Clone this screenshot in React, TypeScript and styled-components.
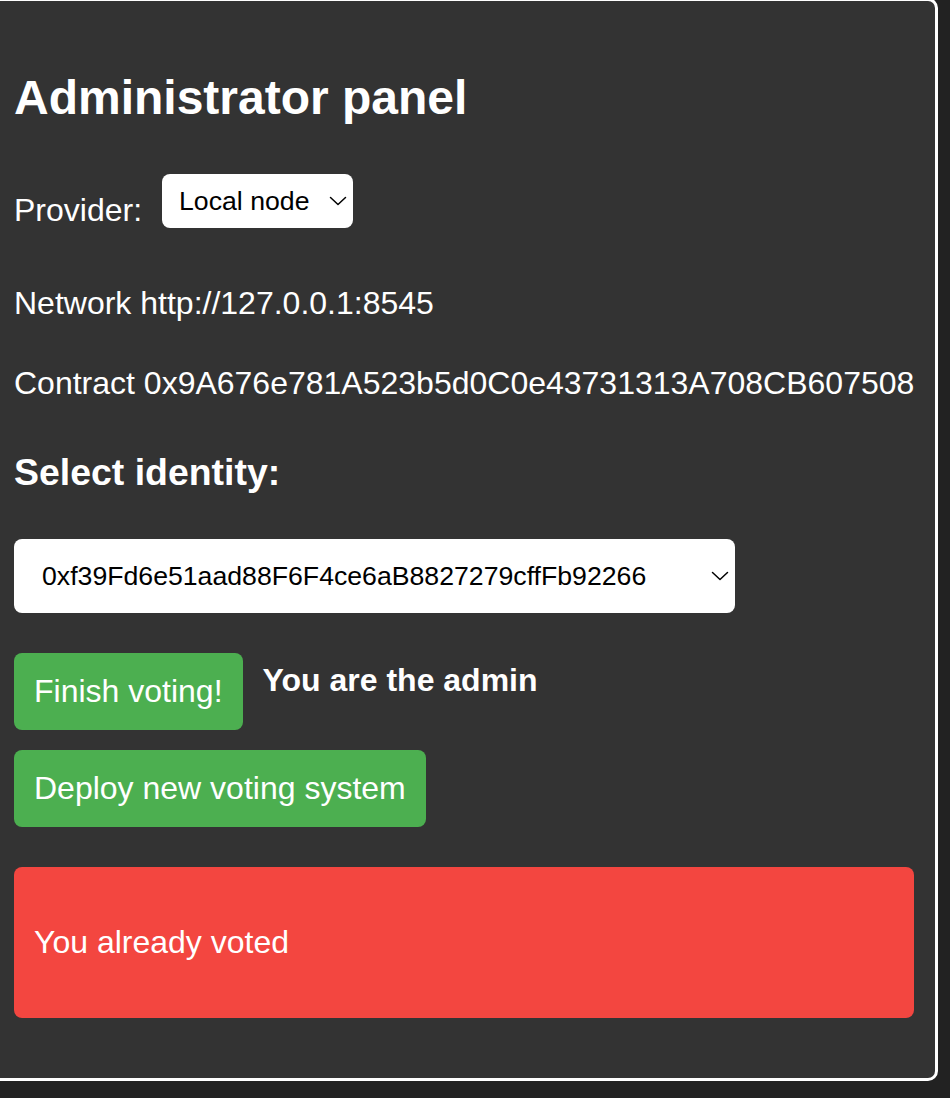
import React, { useState } from 'react';
import styled, { createGlobalStyle } from 'styled-components';

const GlobalStyle = createGlobalStyle`
  html, body {
    margin: 0;
    padding: 0;
    background: #222222;
  }
  body {
    font-family: "Liberation Sans", Arial, Helvetica, sans-serif;
    color: #ffffff;
    overflow: hidden;
  }
`;

const Card = styled.div`
  box-sizing: border-box;
  width: 947px;
  margin: -2px 0 0 -9px;
  padding: 69px 21px 60px 20px;
  background: #333333;
  border: 3px solid #ffffff;
  border-radius: 10px;
  display: flex;
  flex-direction: column;
  align-items: flex-start;
`;

const Title = styled.h2`
  margin: 0;
  font-size: 48px;
  line-height: 56px;
  font-weight: 700;
`;

const SubTitle = styled.h3`
  margin: 49px 0 0;
  font-size: 37.44px;
  line-height: 43px;
  font-weight: 700;
`;

const Row = styled.div<{ $top: number; $align?: string }>`
  display: flex;
  align-items: ${p => p.$align || 'flex-start'};
  gap: 20px;
  margin-top: ${p => p.$top}px;
`;

const Label = styled.label`
  font-size: 32px;
  line-height: 35px;
`;

const Info = styled.p<{ $top: number }>`
  margin: ${p => p.$top}px 0 0;
  font-size: 32px;
  line-height: 37px;
  white-space: nowrap;
`;

const SelectWrap = styled.div<{ $top?: number }>`
  position: relative;
  display: inline-flex;
  margin-top: ${p => p.$top || 0}px;
`;

const Select = styled.select<{ $width: number; $height: number; $pad: number }>`
  appearance: none;
  -webkit-appearance: none;
  box-sizing: border-box;
  width: ${p => p.$width}px;
  height: ${p => p.$height}px;
  padding: 0 30px 0 ${p => p.$pad}px;
  border: none;
  border-radius: 8px;
  background: #ffffff;
  color: #000000;
  font-family: "Liberation Sans", Arial, Helvetica, sans-serif;
  font-size: 26.67px;
  outline: none;
`;

const Chevron = styled.svg<{ $right: number }>`
  position: absolute;
  right: ${p => p.$right}px;
  top: 50%;
  margin-top: -5px;
  width: 18px;
  height: 10px;
  pointer-events: none;
`;

const Button = styled.button`
  box-sizing: border-box;
  padding: 20px;
  border: none;
  border-radius: 8px;
  background: #4caf50;
  color: #ffffff;
  font-family: "Liberation Sans", Arial, Helvetica, sans-serif;
  font-size: 32px;
  line-height: 37px;
  white-space: nowrap;
  cursor: pointer;
`;

const AdminNote = styled.strong`
  margin-top: 9px;
  font-size: 32px;
  line-height: 37px;
  font-weight: 700;
  white-space: nowrap;
`;

const Alert = styled.div`
  box-sizing: border-box;
  align-self: stretch;
  margin-top: 40px;
  padding: 57px 20px;
  border-radius: 8px;
  background: #f34640;
  font-size: 32px;
  line-height: 37px;
`;

const ChevronIcon: React.FC<{ right: number }> = ({ right }) => (
  <Chevron $right={right} viewBox="0 0 18 10">
    <polyline points="1.5,1.5 9,8.5 16.5,1.5" fill="none" stroke="#000" strokeWidth="1.5" strokeLinecap="round" strokeLinejoin="round" />
  </Chevron>
);

const identities = [
  '0xf39Fd6e51aad88F6F4ce6aB8827279cffFb92266',
  '0x70997970C51812dc3A010C7d01b50e0d17dc79C8',
];

export default function App() {
  const [provider, setProvider] = useState('local');
  const [identity, setIdentity] = useState(identities[0]);

  return (
    <>
      <GlobalStyle />
      <Card>
        <Title>Administrator panel</Title>

        <Row $top={48} $align="flex-end">
          <Label htmlFor="provider">Provider:</Label>
          <SelectWrap>
            <Select
              id="provider"
              $width={191}
              $height={54}
              $pad={17}
              value={provider}
              onChange={e => setProvider(e.target.value)}
            >
              <option value="local">Local node</option>
              <option value="metamask">Metamask</option>
            </Select>
            <ChevronIcon right={6} />
          </SelectWrap>
        </Row>

        <Info $top={57}>Network http://127.0.0.1:8545</Info>
        <Info $top={43}>Contract 0x9A676e781A523b5d0C0e43731313A708CB607508</Info>

        <SubTitle>Select identity:</SubTitle>

        <SelectWrap $top={45}>
          <Select
            $width={721}
            $height={74}
            $pad={28}
            value={identity}
            onChange={e => setIdentity(e.target.value)}
          >
            {identities.map(id => (
              <option key={id} value={id}>{id}</option>
            ))}
          </Select>
          <ChevronIcon right={6} />
        </SelectWrap>

        <Row $top={40} $align="flex-start">
          <Button type="button">Finish voting!</Button>
          <AdminNote>You are the admin</AdminNote>
        </Row>

        <Row $top={20}>
          <Button type="button">Deploy new voting system</Button>
        </Row>

        <Alert>You already voted</Alert>
      </Card>
    </>
  );
}
